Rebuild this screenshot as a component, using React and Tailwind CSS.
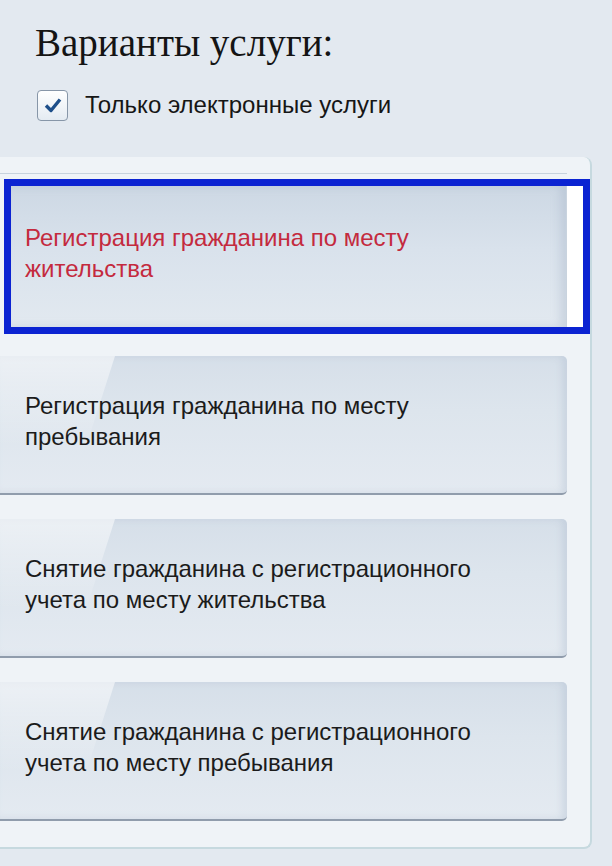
import React from "react";

const OPTIONS = [
  { title: "Регистрация гражданина по месту жительства", active: true },
  { title: "Регистрация гражданина по месту пребывания" },
  { title: "Снятие гражданина с регистрационного учета по месту жительства" },
  { title: "Снятие гражданина с регистрационного учета по месту пребывания" },
];

const Card = ({ title }) => (
  <div className="relative h-[139px] w-[567px] rounded-r-[5px] bg-[linear-gradient(180deg,#d6dfe9_0%,#dde5ed_40%,#e4eaf1_100%)] border-b-2 border-[#909cac] shadow-[inset_-5px_0_7px_rgba(170,184,202,0.35)] flex items-center overflow-hidden">
    {/* glossy diagonal sheen */}
    <div className="absolute left-0 top-0 h-[90px] w-[115px] bg-[linear-gradient(180deg,rgba(255,255,255,0.55),rgba(255,255,255,0))] [clip-path:polygon(0_0,100%_0,75%_100%,0_100%)]" />
    <p className="relative w-[480px] pl-[25px] pb-[7px] text-[24px] leading-[31px] text-[#1b1b1b]">
      {title}
    </p>
  </div>
);

export default function App() {
  return (
    <div className="w-[612px] h-[866px] overflow-hidden bg-[#e3e9f0] font-['Liberation_Sans',Arial,sans-serif]">
      <div className="pl-[35px] pt-[20px]">
        <h1 className="font-['Liberation_Serif','Times_New_Roman',serif] text-[39px] leading-[46px] text-[#141414]">
          Варианты услуги:
        </h1>
        <label className="mt-[21px] flex items-center gap-[17px]">
          <span className="ml-[2px] flex h-[31px] w-[31px] items-center justify-center rounded-[4px] border border-[#8796a8] bg-[linear-gradient(180deg,#ffffff,#e4ebf2)]">
            <svg viewBox="0 0 20 20" className="h-[20px] w-[20px]">
              <path d="M3 10.5 L8 15.5 L17 4.5" fill="none" stroke="#1e4f8a" strokeWidth="3.4" strokeLinejoin="round" />
            </svg>
          </span>
          <span className="text-[24px] text-[#161616]">Только электронные услуги</span>
        </label>
      </div>

      {/* Panel */}
      <div className="mt-[34px] w-[592px] rounded-r-[8px] bg-[#eff3f7] border-r-2 border-b-2 border-[#c6d9df] pt-[16px] pb-[26px] flex flex-col gap-[24px]">
        {/* Selected option with highlight frame */}
        <div className="relative -mb-[2px]">
          <div className="absolute left-0 top-0 h-px w-[567px] bg-[#c7d2dd]" />
          <div className="ml-[4px] mt-[6px] w-[586px] border-[7px] border-[#0b23d2] bg-white">
            <div className="flex">
              <div className="relative h-[141px] w-[555px] bg-[linear-gradient(180deg,#cdd8e4_0%,#d9e2ec_45%,#e2e9f0_100%)] shadow-[inset_-6px_0_8px_rgba(160,176,196,0.35)] flex items-center">
                <p className="relative w-[480px] pl-[14px] pb-[8px] text-[24px] leading-[31px] text-[#c42a3e]">
                  {OPTIONS[0].title}
                </p>
              </div>
              <div className="flex-1 border-l border-[#c9d3de] bg-white" />
            </div>
          </div>
        </div>
        {OPTIONS.slice(1).map((o) => (
          <Card key={o.title} {...o} />
        ))}
      </div>
    </div>
  );
}
